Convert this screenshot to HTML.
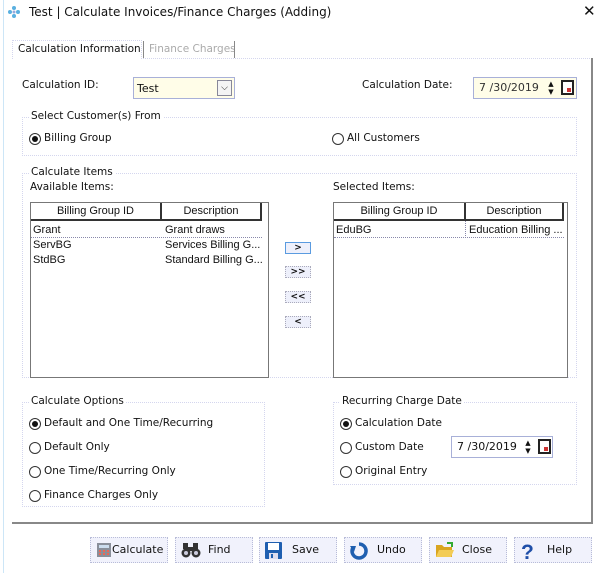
<!DOCTYPE html>
<html><head><meta charset="utf-8"><style>
*{box-sizing:border-box}
body{margin:0;width:600px;height:573px;background:#fff;font-family:"DejaVu Sans","Liberation Sans",sans-serif;font-size:10.5px;color:#111;position:relative;overflow:hidden}
.a{position:absolute;white-space:nowrap}
.grp{position:absolute;border:1px dotted #d4d6ee}
.gl{position:absolute;background:#fff;padding:0 2px;top:-8px;left:6px}
.r{position:absolute;width:12px;height:12px;border:1px solid #333;border-radius:50%;background:#fff}
.r.on::after{content:"";position:absolute;left:2px;top:2px;width:6px;height:6px;border-radius:50%;background:#111}
.list{position:absolute;border:1px solid #777;background:#fff;font-family:"Liberation Sans",sans-serif;font-size:11px}
.hd{position:absolute;top:0;height:18px;border-right:2px solid #333;border-bottom:2px solid #333;text-align:center;line-height:16px}
.row{position:absolute;height:14px;line-height:14px;padding-left:2px}
.ab{position:absolute;width:26px;height:12px;border:1px dotted #aab;background:#eef0fb;font-size:9px;font-weight:bold;text-align:center;line-height:10px}
.btn{position:absolute;top:537px;width:78px;height:26px;border:1px dotted #b8bcd8;background:#f1f2fc;font-size:11px;line-height:24px}
.btn svg{position:absolute;left:5px;top:4px}
.date{position:absolute;height:22px;border:1px solid #a8b0d8;font-size:11px;line-height:20px;padding-left:5px}
</style></head><body>
<div class="a" style="left:3px;top:0;width:1px;height:573px;background:#cde6f7"></div>
<svg class="a" style="left:7px;top:5px" width="14" height="14" viewBox="0 0 14 14"><g fill="#5ab0e0"><circle cx="7" cy="3" r="2"/><circle cx="3" cy="7" r="2"/><circle cx="11" cy="7" r="2"/><circle cx="7" cy="11" r="2"/><circle cx="7" cy="7" r="1.5" fill="#9ad"/></g></svg>
<div class="a" style="left:29px;top:5px;font-size:12px">Test | Calculate Invoices/Finance Charges (Adding)</div>
<div class="a" style="left:583px;top:2px;font-size:15px">✕</div>

<div class="a" style="left:12px;top:58px;width:580px;height:1px;border-top:1px dotted #d4d6ee"></div>
<div class="a" style="left:591px;top:58px;width:2px;height:466px;background:#888"></div>
<div class="a" style="left:12px;top:522px;width:581px;height:2px;background:#888"></div>
<div class="a" style="left:12px;top:40px;width:130px;height:19px;border:1px dotted #d4d6ee;border-bottom:none;background:#fff"></div>
<div class="a" style="left:18px;top:43px">Calculation Information</div>
<div class="a" style="left:143px;top:41px;width:1px;height:17px;background:#888"></div>
<div class="a" style="left:149px;top:43px;color:#aaa">Finance Charges</div>
<div class="a" style="left:234px;top:41px;width:1px;height:17px;background:#888"></div>

<div class="a" style="left:22px;top:79px">Calculation ID:</div>
<div class="a" style="left:133px;top:77px;width:102px;height:22px;border:1px solid #a8b0d8;background:#fffde8"><span class="a" style="left:3px;top:4px;font-size:11px">Test</span><div class="a" style="right:2px;top:2px;width:15px;height:16px;border:1px solid #889;background:#f4f4f4;font-size:9px;text-align:center;line-height:14px">⌵</div></div>
<div class="a" style="left:362px;top:79px">Calculation Date:</div>
<div class="date" style="left:473px;top:77px;width:104px;background:#fffde8;color:#333">7 /30/2019</div>
<div class="a" style="left:546px;top:80px;width:10px;height:16px;font-size:7px;line-height:8px;text-align:center">▲<br>▼</div>
<div class="a" style="left:561px;top:80px;width:13px;height:15px;border:2px solid #222;background:#fff"><div class="a" style="right:1px;bottom:1px;width:4px;height:4px;background:#c33"></div></div>

<div class="grp" style="left:22px;top:117px;width:555px;height:39px"><span class="gl">Select Customer(s) From</span></div>
<div class="r on" style="left:29px;top:133px"></div><div class="a" style="left:44px;top:132px">Billing Group</div>
<div class="r" style="left:332px;top:133px"></div><div class="a" style="left:347px;top:132px">All Customers</div>

<div class="grp" style="left:22px;top:173px;width:555px;height:205px"><span class="gl">Calculate Items</span></div>
<div class="a" style="left:30px;top:181px">Available Items:</div>
<div class="a" style="left:333px;top:181px">Selected Items:</div>
<div class="list" style="left:30px;top:202px;width:239px;height:176px">
 <div class="hd" style="left:0;width:131px">Billing Group ID</div>
 <div class="hd" style="left:131px;width:100px">Description</div>
 <div class="row" style="top:20px;left:0">Grant</div><div class="row" style="top:20px;left:132px">Grant draws</div>
 <div class="a" style="left:0;top:34px;width:231px;border-top:1px dotted #88a"></div>
 <div class="row" style="top:35px;left:0">ServBG</div><div class="row" style="top:35px;left:132px">Services Billing G...</div>
 <div class="row" style="top:50px;left:0">StdBG</div><div class="row" style="top:50px;left:132px">Standard Billing G...</div>
</div>
<div class="list" style="left:333px;top:202px;width:235px;height:176px">
 <div class="hd" style="left:0;width:132px">Billing Group ID</div>
 <div class="hd" style="left:132px;width:98px">Description</div>
 <div class="row" style="top:20px;left:0">EduBG</div><div class="row" style="top:20px;left:133px">Education Billing ...</div>
 <div class="a" style="left:0;top:34px;width:230px;border-top:1px dotted #88a"></div>
 <div class="a" style="left:131px;top:18px;height:17px;border-left:1px dotted #88a"></div>
</div>
<div class="ab" style="left:285px;top:242px;border:1px solid #5a9be0">&gt;</div>
<div class="ab" style="left:285px;top:266px">&gt;&gt;</div>
<div class="ab" style="left:285px;top:291px">&lt;&lt;</div>
<div class="ab" style="left:285px;top:316px">&lt;</div>

<div class="grp" style="left:22px;top:402px;width:243px;height:105px"><span class="gl">Calculate Options</span></div>
<div class="r on" style="left:29px;top:418px"></div><div class="a" style="left:44px;top:417px">Default and One Time/Recurring</div>
<div class="r" style="left:29px;top:442px"></div><div class="a" style="left:44px;top:441px">Default Only</div>
<div class="r" style="left:29px;top:466px"></div><div class="a" style="left:44px;top:465px">One Time/Recurring Only</div>
<div class="r" style="left:29px;top:490px"></div><div class="a" style="left:44px;top:489px">Finance Charges Only</div>

<div class="grp" style="left:333px;top:402px;width:244px;height:83px"><span class="gl">Recurring Charge Date</span></div>
<div class="r on" style="left:340px;top:418px"></div><div class="a" style="left:355px;top:417px">Calculation Date</div>
<div class="r" style="left:340px;top:442px"></div><div class="a" style="left:355px;top:441px">Custom Date</div>
<div class="r" style="left:340px;top:466px"></div><div class="a" style="left:355px;top:465px">Original Entry</div>
<div class="date" style="left:451px;top:436px;width:102px;background:#fff">7 /30/2019</div>
<div class="a" style="left:523px;top:439px;width:10px;height:16px;font-size:7px;line-height:8px;text-align:center">▲<br>▼</div>
<div class="a" style="left:538px;top:439px;width:13px;height:15px;border:2px solid #222;background:#fff"><div class="a" style="right:1px;bottom:1px;width:4px;height:4px;background:#c33"></div></div>

<div class="btn" style="left:90px"><svg width="16" height="16"><rect x="1" y="1" width="14" height="14" fill="#8a8f9a"/><rect x="3" y="3" width="10" height="3" fill="#cde"/><g fill="#e65"><rect x="3" y="8" width="2" height="2"/><rect x="7" y="8" width="2" height="2"/><rect x="11" y="8" width="2" height="2"/><rect x="3" y="11" width="2" height="2"/><rect x="7" y="11" width="2" height="2"/><rect x="11" y="11" width="2" height="2"/></g></svg><span class="a" style="left:21px">Calculate</span></div>
<div class="btn" style="left:175px"><svg width="20" height="16"><g fill="#333"><rect x="2" y="1" width="5" height="6"/><rect x="12" y="1" width="5" height="6"/><circle cx="5" cy="11" r="4.5"/><circle cx="15" cy="11" r="4.5"/><rect x="7" y="5" width="6" height="4"/></g><circle cx="5" cy="11" r="2" fill="#ccd"/><circle cx="15" cy="11" r="2" fill="#ccd"/></svg><span class="a" style="left:32px">Find</span></div>
<div class="btn" style="left:259px"><svg width="17" height="17"><rect x="0" y="0" width="17" height="17" rx="1" fill="#1f5fb0"/><rect x="3" y="1" width="11" height="7" fill="#fff"/><rect x="4" y="11" width="9" height="6" fill="#dde"/><rect x="6" y="12" width="2" height="4" fill="#1f5fb0"/></svg><span class="a" style="left:32px">Save</span></div>
<div class="btn" style="left:344px"><svg width="18" height="18"><path d="M9 2a7 7 0 1 1-6.3 4" fill="none" stroke="#1f5fb0" stroke-width="3.5"/><path d="M0 4l6 0-2 6z" fill="#1f5fb0"/></svg><span class="a" style="left:32px">Undo</span></div>
<div class="btn" style="left:429px"><svg width="20" height="17"><path d="M1 3h6l2 2h8v10H1z" fill="#d9a520"/><path d="M4 8h15l-3 7H1z" fill="#f3cc55"/><path d="M12 1l5 0 0 4" fill="none" stroke="#3a3" stroke-width="2"/></svg><span class="a" style="left:32px">Close</span></div>
<div class="btn" style="left:514px"><svg width="16" height="20"><text x="1" y="17" font-family="Liberation Sans" font-weight="bold" font-size="21" fill="#1f4fa8">?</text></svg><span class="a" style="left:32px">Help</span></div>
</body></html>
